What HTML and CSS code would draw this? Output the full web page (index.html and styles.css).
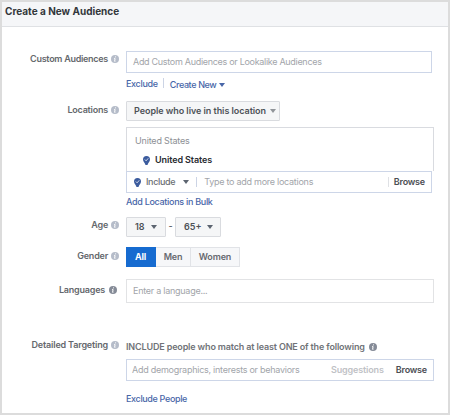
FILE: index.html
```html
<!DOCTYPE html>
<html lang="en">
<head>
<meta charset="utf-8">
<title>Create a New Audience</title>
<link rel="stylesheet" href="styles.css">
</head>
<body>
<svg width="0" height="0" class="defs">
  <symbol id="info" viewBox="0 0 16 16"><circle cx="8" cy="8" r="8" fill="currentColor"/><path d="M9 2.8l-.3 2M6.2 7.2h2L7.2 12.6h1.6" fill="none" stroke="#fff" stroke-width="2"/></symbol>
  <symbol id="pin" viewBox="0 0 14 18"><path d="M7 0a7 7 0 0 1 7 7c0 4-4 7-5 11H5C4 14 0 11 0 7a7 7 0 0 1 7-7z" fill="#3c5c9e"/><path d="M3.7 7l2.5 2.6 4.3-5" fill="none" stroke="#fff" stroke-width="1.5"/></symbol>
</svg>
<main class="dialog">
  <header class="title"><span class="t-title">Create a New Audience</span></header>
  <form class="form">
    <section class="row row-custom">
      <div class="label"><span class="t-custom">Custom Audiences</span><svg class="info"><use href="#info"/></svg></div>
      <div class="field">
        <div class="input narrow"><span class="hint t-add">Add Custom Audiences or Lookalike Audiences</span></div>
        <div class="links"><a class="t-exclude">Exclude</a><i class="bar"></i><a class="t-create">Create New</a><i class="caret blue"></i></div>
      </div>
    </section>
    <section class="row row-locations">
      <div class="label"><span class="t-loc">Locations</span><svg class="info"><use href="#info"/></svg></div>
      <div class="field">
        <div class="button place"><span class="t-people">People who live in this location</span><i class="caret faint"></i></div>
        <div class="panel">
          <div class="country">United States</div>
          <div class="picked"><svg class="pin"><use href="#pin"/></svg><span>United States</span></div>
        </div>
        <div class="input narrow include">
          <svg class="pin"><use href="#pin"/></svg><span class="mode">Include</span><i class="caret dark"></i><i class="bar"></i><span class="hint t-type">Type to add more locations</span><i class="bar pale"></i><b class="browse">Browse</b>
        </div>
        <a class="bulk">Add Locations in Bulk</a>
      </div>
    </section>
    <section class="row row-age">
      <div class="label"><span class="t-loc">Age</span><svg class="info"><use href="#info"/></svg></div>
      <div class="field ages">
        <div class="button age-from"><span>18</span><i class="caret dark"></i></div><span class="dash">-</span><div class="button age-to"><span>65+</span><i class="caret dark"></i></div>
      </div>
    </section>
    <section class="row row-gender">
      <div class="label"><span class="t-loc">Gender</span><svg class="info"><use href="#info"/></svg></div>
      <div class="field tabs"><div class="tab all">All</div><div class="tab men">Men</div><div class="tab women">Women</div></div>
    </section>
    <section class="row row-lang">
      <div class="label"><span class="t-loc">Languages</span><svg class="info strong"><use href="#info"/></svg></div>
      <div class="field"><div class="input lang"><span class="hint t-type">Enter a language...</span></div></div>
    </section>
    <section class="row row-detail">
      <div class="label"><span class="t-detail">Detailed Targeting</span><svg class="info"><use href="#info"/></svg></div>
      <div class="field">
        <div class="lead"><span class="t-lead">INCLUDE people who match at least ONE of the following</span><svg class="info strong"><use href="#info"/></svg></div>
        <div class="input targeting"><span class="hint t-type">Add demographics, interests or behaviors</span><span class="suggest">Suggestions</span><b class="browse">Browse</b></div>
        <a class="people">Exclude People</a>
      </div>
    </section>
  </form>
</main>
</body>
</html>
```
FILE: styles.css
```css
* { box-sizing: border-box; }
body { margin: 0; font: 500 9px/12px Inter, "Liberation Sans", sans-serif; color: #55585d; white-space: nowrap; }
.defs { display: none; }
.dialog { height: 415px; border: 2px solid #dcdcdc; background: #fff; }
.title { height: 25px; padding: 3px 0 0 3px; background: #f5f6f8; border-bottom: 1px solid #dfe1e4; font-size: 10px; font-weight: 700; color: #33363b; }
.form { padding-top: 24px; }
.row { display: grid; grid-template-columns: 117px 308px; column-gap: 7px; }
.row-custom { height: 50px; }
.row-locations { height: 116px; }
.row-age { height: 30px; }
.row-gender { height: 32px; }
.row-lang { height: 62px; }
.label { display: flex; justify-content: flex-end; align-items: center; gap: 3px; height: 12px; margin-top: 2px; font-weight: 600; color: #65686d; }
.row-locations .label, .row-gender .label { margin-top: 3px; }
.row-lang .label { gap: 4px; padding-right: 2px; margin-top: 5px; }
.row-detail .label { margin-top: -2px; }
.t-custom { letter-spacing: -.28px; }
.t-loc { letter-spacing: -.22px; }
.t-detail { letter-spacing: -.17px; }
.t-add { letter-spacing: -.3px; }
.t-type { letter-spacing: -.26px; }
.t-exclude { letter-spacing: -.32px; }
.t-create { letter-spacing: -.38px; }
.t-people { letter-spacing: -.05px; }
.t-lead { letter-spacing: -.15px; }
.info { width: 8px; height: 8px; color: #b5bcc9; flex: none; }
.info.strong { color: #858b97; }
.input { display: flex; align-items: center; width: 308px; height: 22px; padding-left: 6px; border: 1px solid #cdd6e8; }
.narrow { width: 306px; }
.hint { color: #a2a5aa; font-weight: 400; }
a { color: #4866a8; }
.links { display: flex; align-items: center; height: 12px; margin-top: 5px; }
.bar { width: 1px; height: 10px; background: #ccd4e5; flex: none; }
.links .bar { margin: -3px 6px 0 5px; }
.links .t-create, .links .caret { margin-top: 2px; }
.caret { border: 3px solid transparent; border-top: 4px solid #5c6470; border-bottom: 0; flex: none; }
.caret.blue { border-top-color: #4866a8; margin-left: 3px; }
.caret.faint { border-top-color: #909499; margin-left: 4px; }
.button { display: flex; align-items: center; height: 20px; padding-left: 7px; border: 1px solid #d9dbdf; border-radius: 1px; background: #f5f6f7; font-weight: 600; color: #4e5257; }
.place { width: 154px; }
.panel { height: 44px; margin-top: 6px; padding: 7px 0 0 8px; border: 1px solid #d9dbe0; border-bottom: 0; }
.country { color: #8d9095; font-weight: 400; letter-spacing: -.18px; }
.picked { display: flex; align-items: center; margin-top: 7px; padding-left: 8px; font-weight: 600; color: #282b30; letter-spacing: -.1px; }
.pin { width: 7px; height: 9px; flex: none; }
.picked .pin { margin-right: 5px; }
.include { padding-left: 7px; }
.mode { margin-left: 5px; color: #6b6e73; letter-spacing: -.35px; }
.include .caret { margin: 0 7px 0 8px; }
.include .hint { margin-left: 7px; }
.include .bar.pale { margin-left: auto; background: #dfe1e5; }
.browse { font-weight: 600; color: #4b4e53; margin: 0 6px 0 5px; letter-spacing: -.2px; }
.bulk, .people { display: block; margin-top: 3px; letter-spacing: -.3px; }
.ages { display: flex; }
.age-from { width: 40px; padding-left: 8px; }
.age-to { width: 46px; padding-left: 8px; }
.ages .caret { margin-left: 6px; }
.dash { width: 9px; text-align: center; margin-top: 3px; }
.tabs { display: flex; height: 20px; }
.tab { display: flex; align-items: center; justify-content: center; height: 20px; border: 1px solid #e1e3e7; border-left: 0; background: #f6f7f9; font-weight: 600; color: #666970; letter-spacing: -.15px; }
.all { width: 30px; border-color: #166bd0; background: #166bd0; color: #fff; font-weight: 700; }
.men { width: 35px; }
.women { width: 49px; }
.lang { height: 24px; border-color: #e2e3e5; }
.lead { display: flex; align-items: center; gap: 4px; height: 12px; margin-bottom: 6px; font-weight: 600; color: #707378; }
.targeting { padding-left: 5px; }
.suggest { margin-left: auto; color: #bfc2c6; font-weight: 600; letter-spacing: -.15px; }
.row-detail .browse { margin-left: 12px; }
.people { margin-top: 12px; letter-spacing: -.35px; }
```
